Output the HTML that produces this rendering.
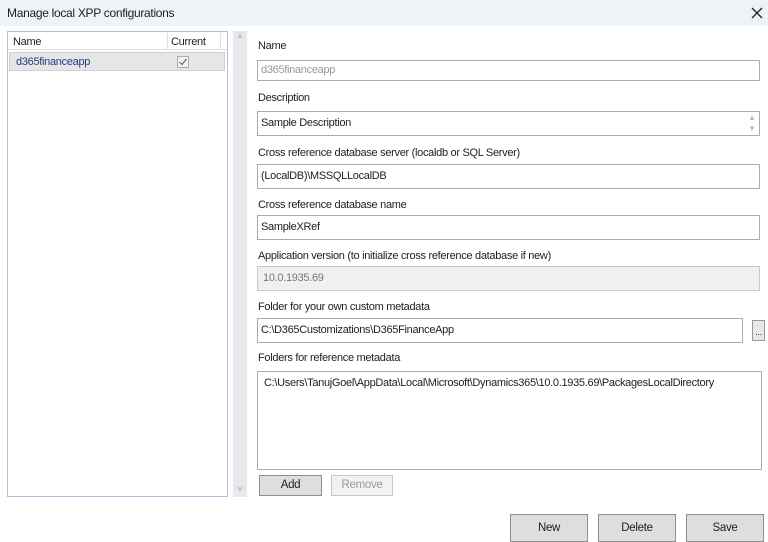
<!DOCTYPE html>
<html><head><style>
body{margin:0;width:768px;height:541px;overflow:hidden;background:#fff;font-family:"Liberation Sans",sans-serif;font-size:11px;letter-spacing:-0.3px;color:#1e1e1e;position:relative}
div{position:absolute;box-sizing:border-box}
.t{white-space:nowrap}
.f{border:1px solid #ababab;background:#fff;padding-left:3px;line-height:23px}
.b{border:1px solid #8f8f8f;background:#dedede;text-align:center;font-size:11.5px}
</style></head><body>
<div style="left:0;top:0;width:768px;height:26px;background:#eef3f8"></div>
<div class="t" style="left:7px;top:6px;font-size:12px">Manage local XPP configurations</div>
<svg style="position:absolute;left:751px;top:7px" width="12" height="12"><path d="M1 1L11 11M11 1L1 11" stroke="#222" stroke-width="1.3"/></svg>

<div style="left:7px;top:31px;width:221px;height:466px;border:1px solid #a9c4de"></div>
<div style="left:8px;top:33px;width:219px;height:17px;border-bottom:1px solid #e0e0e0"></div>
<div style="left:167px;top:33px;width:1px;height:17px;background:#e0e0e0"></div>
<div style="left:220px;top:33px;width:1px;height:17px;background:#e0e0e0"></div>
<div class="t" style="left:13px;top:36px">Name</div>
<div class="t" style="left:171px;top:36px">Current</div>
<div style="left:9px;top:52px;width:216px;height:19px;background:#e6e6e6;border:1px solid #d0d0d0"></div>
<div class="t" style="left:16px;top:56px;color:#1f3c88">d365financeapp</div>
<div style="left:177px;top:56px;width:12px;height:12px;border:1px solid #aaa;background:#f4f4f4"></div>
<svg style="position:absolute;left:178px;top:57px" width="10" height="10"><path d="M1.5 5L4 7.5L8.5 2" stroke="#666" fill="none" stroke-width="1.2"/></svg>

<div style="left:233px;top:31px;width:14px;height:466px;background:#e8e8ec"></div>
<div class="t" style="left:236px;top:31px;color:#c0c0c0;font-size:8px">▲</div>
<div class="t" style="left:236px;top:485px;color:#c0c0c0;font-size:8px">▼</div>

<div class="t" style="left:258px;top:40px">Name</div>
<div class="f" style="left:257px;top:60px;width:503px;height:21px;line-height:19px;color:#999">d365financeapp</div>
<div class="t" style="left:258px;top:92px">Description</div>
<div class="f" style="left:257px;top:111px;width:503px;height:25px">Sample Description</div>
<div class="t" style="left:748px;top:113px;color:#bbb;font-size:8px">▲</div>
<div class="t" style="left:748px;top:124px;color:#bbb;font-size:8px">▼</div>
<div class="t" style="left:258px;top:147px">Cross reference database server (localdb or SQL Server)</div>
<div class="f" style="left:257px;top:164px;width:503px;height:25px">(LocalDB)\MSSQLLocalDB</div>
<div class="t" style="left:258px;top:199px">Cross reference database name</div>
<div class="f" style="left:257px;top:215px;width:503px;height:25px">SampleXRef</div>
<div class="t" style="left:258px;top:250px">Application version (to initialize cross reference database if new)</div>
<div class="f" style="left:257px;top:266px;width:503px;height:25px;background:#f0f0f0;color:#777;padding-left:5px;border-color:#c8c8c8">10.0.1935.69</div>
<div class="t" style="left:258px;top:301px">Folder for your own custom metadata</div>
<div class="f" style="left:257px;top:318px;width:486px;height:25px">C:\D365Customizations\D365FinanceApp</div>
<div style="left:752px;top:320px;width:13px;height:21px;border:1px solid #999;background:#e8e8e8;font-size:9px;text-align:center;line-height:22px">...</div>
<div class="t" style="left:258px;top:352px">Folders for reference metadata</div>
<div class="f" style="left:257px;top:371px;width:505px;height:99px;line-height:normal;padding:5px 0 0 6px;font-size:11px">C:\Users\TanujGoel\AppData\Local\Microsoft\Dynamics365\10.0.1935.69\PackagesLocalDirectory</div>
<div class="b" style="left:259px;top:475px;width:63px;height:21px;line-height:19px">Add</div>
<div class="b" style="left:331px;top:475px;width:62px;height:21px;line-height:19px;background:#f2f2f2;border-color:#c8c8c8;color:#999">Remove</div>
<div class="b" style="left:510px;top:514px;width:78px;height:28px;line-height:27px">New</div>
<div class="b" style="left:598px;top:514px;width:78px;height:28px;line-height:27px">Delete</div>
<div class="b" style="left:686px;top:514px;width:78px;height:28px;line-height:27px">Save</div>
</body></html>
